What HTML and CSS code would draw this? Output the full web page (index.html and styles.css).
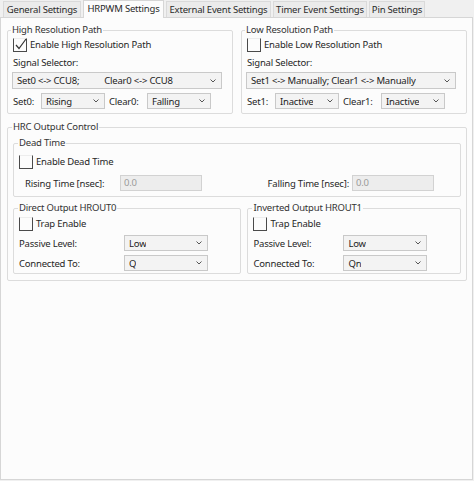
FILE: index.html
```html
<!DOCTYPE html>
<html>
<head>
<meta charset="utf-8">
<link rel="stylesheet" href="styles.css">
</head>
<body>
<div class="tabs">
  <div class="tab t-general">General Settings</div>
  <div class="tab t-hrpwm active">HRPWM Settings</div>
  <div class="tab t-ext">External Event Settings</div>
  <div class="tab t-timer">Timer Event Settings</div>
  <div class="tab t-pin">Pin Settings</div>
</div>
<div class="panel">
  <div class="top-row">
    <fieldset class="grp path">
      <legend>High Resolution Path</legend>
      <div class="chk"><span class="box"><svg width="13" height="13" viewBox="0 0 13 13"><polyline points="2,7 5,10.5 12,1" fill="none" stroke="#333" stroke-width="1.2"/></svg></span>Enable High Resolution Path</div>
      <div class="lbl">Signal Selector:</div>
      <div class="combo wide"><span class="val">Set0 &lt;-&gt; CCU8;&nbsp;&nbsp;&nbsp;&nbsp;&nbsp;&nbsp;&nbsp;&nbsp;&nbsp;&nbsp; Clear0 &lt;-&gt; CCU8</span><span class="arr"><svg width="6" height="4" viewBox="0 0 6 4"><polyline points="0.5,0.5 3,3 5.5,0.5" fill="none" stroke="#555" stroke-width="1"/></svg></span></div>
      <div class="pair">
        <span class="plbl">Set0:</span>
        <div class="combo small"><span class="val">Rising</span><span class="arr"><svg width="6" height="4" viewBox="0 0 6 4"><polyline points="0.5,0.5 3,3 5.5,0.5" fill="none" stroke="#555" stroke-width="1"/></svg></span></div>
        <span class="plbl2">Clear0:</span>
        <div class="combo small"><span class="val">Falling</span><span class="arr"><svg width="6" height="4" viewBox="0 0 6 4"><polyline points="0.5,0.5 3,3 5.5,0.5" fill="none" stroke="#555" stroke-width="1"/></svg></span></div>
      </div>
    </fieldset>
    <fieldset class="grp path">
      <legend>Low Resolution Path</legend>
      <div class="chk"><span class="box"></span>Enable Low Resolution Path</div>
      <div class="lbl">Signal Selector:</div>
      <div class="combo wide"><span class="val">Set1 &lt;-&gt; Manually; Clear1 &lt;-&gt; Manually</span><span class="arr"><svg width="6" height="4" viewBox="0 0 6 4"><polyline points="0.5,0.5 3,3 5.5,0.5" fill="none" stroke="#555" stroke-width="1"/></svg></span></div>
      <div class="pair">
        <span class="plbl">Set1:</span>
        <div class="combo small"><span class="val">Inactive</span><span class="arr"><svg width="6" height="4" viewBox="0 0 6 4"><polyline points="0.5,0.5 3,3 5.5,0.5" fill="none" stroke="#555" stroke-width="1"/></svg></span></div>
        <span class="plbl2">Clear1:</span>
        <div class="combo small"><span class="val">Inactive</span><span class="arr"><svg width="6" height="4" viewBox="0 0 6 4"><polyline points="0.5,0.5 3,3 5.5,0.5" fill="none" stroke="#555" stroke-width="1"/></svg></span></div>
      </div>
    </fieldset>
  </div>

  <fieldset class="grp hrc">
    <legend>HRC Output Control</legend>
    <fieldset class="grp dead">
      <legend>Dead Time</legend>
      <div class="chk"><span class="box"></span>Enable Dead Time</div>
      <div class="times">
        <span class="tlbl">Rising Time [nsec]:</span>
        <div class="num">0.0</div>
        <span class="tlbl2">Falling Time [nsec]:</span>
        <div class="num">0.0</div>
      </div>
    </fieldset>
    <div class="out-row">
      <fieldset class="grp out direct">
        <legend>Direct Output HROUT0</legend>
        <div class="chk"><span class="box"></span>Trap Enable</div>
        <div class="orow"><span class="olbl">Passive Level:</span><div class="combo mid"><span class="val">Low</span><span class="arr"><svg width="6" height="4" viewBox="0 0 6 4"><polyline points="0.5,0.5 3,3 5.5,0.5" fill="none" stroke="#555" stroke-width="1"/></svg></span></div></div>
        <div class="orow"><span class="olbl">Connected To:</span><div class="combo mid"><span class="val">Q</span><span class="arr"><svg width="6" height="4" viewBox="0 0 6 4"><polyline points="0.5,0.5 3,3 5.5,0.5" fill="none" stroke="#555" stroke-width="1"/></svg></span></div></div>
      </fieldset>
      <fieldset class="grp out inverted">
        <legend>Inverted Output HROUT1</legend>
        <div class="chk"><span class="box"></span>Trap Enable</div>
        <div class="orow"><span class="olbl">Passive Level:</span><div class="combo mid"><span class="val">Low</span><span class="arr"><svg width="6" height="4" viewBox="0 0 6 4"><polyline points="0.5,0.5 3,3 5.5,0.5" fill="none" stroke="#555" stroke-width="1"/></svg></span></div></div>
        <div class="orow"><span class="olbl">Connected To:</span><div class="combo mid"><span class="val">Qn</span><span class="arr"><svg width="6" height="4" viewBox="0 0 6 4"><polyline points="0.5,0.5 3,3 5.5,0.5" fill="none" stroke="#555" stroke-width="1"/></svg></span></div></div>
      </fieldset>
    </div>
  </fieldset>
</div>
</body>
</html>
```

FILE: styles.css
```css
* { box-sizing: border-box; }
html, body { margin: 0; padding: 0; }
body {
  background: #f0f0f0;
  font-family: "Noto Sans", "Open Sans", sans-serif;
  font-size: 9.5px;
  letter-spacing: -0.2px;
  color: #262626;
  width: 474px;
  height: 481px;
  overflow: hidden;
}

/* tabs */
.tabs {
  display: flex;
  align-items: flex-end;
  height: 17px;
  padding-left: 3px;
  gap: 2px;
  position: relative;
  z-index: 1;
}
.tab {
  height: 16px;
  line-height: 16px;
  text-align: center;
  background: #ebebeb;
  border: 1px solid #dadada;
  border-bottom: none;
  white-space: nowrap;
  color: #2a2a2a;
}
.tab.active {
  height: 18px;
  line-height: 16px;
  margin-bottom: -1px;
  background: #fcfcfc;
  border-color: #d6d6d6;
}
.t-general { width: 78px; }
.t-hrpwm { width: 81px; }
.t-ext { width: 105px; }
.t-timer { width: 94px; }
.t-pin { width: 56px; }

/* panel */
.panel {
  width: 473px;
  height: 463px;
  background: #fcfcfc;
  border: 1px solid #d6d6d6;
  padding: 5px 5px 0 6px;
}

fieldset.grp {
  margin: 0;
  border: 1px solid #dcdcdc;
  border-radius: 2px;
  min-width: 0;
}
fieldset.grp > legend {
  padding: 0 1px;
  margin-left: -1px;
  line-height: 14px;
  color: #333;
}
.path > legend { margin-left: 0; }

.top-row {
  display: flex;
  gap: 8px;
}
.path {
  width: 226px;
  height: 91px;
  padding: 0 4px 0 4px;
}

.chk {
  display: flex;
  align-items: center;
  height: 15px;
  white-space: nowrap;
}
.path .chk { margin-left: 1px; }
.box {
  display: inline-block;
  width: 14px;
  height: 14px;
  border: 1px solid #4a4a4a;
  border-top-color: #ededed;
  margin-right: 3px;
  position: relative;
  flex: none;
}
.box svg { position: absolute; left: 0; top: -1px; }

.lbl {
  margin-top: 4px;
  height: 14px;
  line-height: 14px;
  margin-left: 1px;
}

.combo {
  display: flex;
  align-items: center;
  justify-content: space-between;
  background: #f3f3f3;
  border: 1px solid #c9c9c9;
  height: 16px;
  padding-left: 4px;
  white-space: nowrap;
  color: #222;
}
.combo .arr {
  width: 16px;
  display: flex;
  justify-content: center;
  align-items: center;
}
.combo .val { overflow: hidden; }
.combo.wide { width: 210px; height: 17px; margin-top: 2px; }
.combo.small { width: 64px; }
.combo.mid { width: 84px; }

.pair {
  display: flex;
  align-items: center;
  margin-top: 4px;
  height: 16px;
}
.plbl { width: 29px; padding-left: 1px; }
.plbl2 { width: 42px; padding-left: 4px; }

.hrc {
  margin-top: 6px !important;
  width: 460px;
  height: 161px;
  padding: 2px 5px 0 5px;
}

.dead {
  height: 61px;
  padding: 0 5px;
}
.dead .chk { margin-top: 4px; }
.times {
  display: flex;
  align-items: center;
  margin-top: 6px;
  height: 16px;
}
.tlbl { width: 101px; padding-left: 6px; }
.tlbl2 { width: 150px; text-align: right; padding-right: 3px; }
.num {
  width: 82px;
  height: 16px;
  line-height: 14px;
  background: #ededed;
  border: 1px solid #d2d2d2;
  color: #9a9a9a;
  padding-left: 3px;
}

.out-row {
  display: flex;
  gap: 6px;
  margin-top: 4px;
}
.out {
  height: 73px;
  padding: 0 5px;
}
.direct { width: 229px; }
.inverted { width: 214px; }
.out .chk { margin-top: 1px; }
.orow {
  display: flex;
  align-items: center;
  margin-top: 4px;
  height: 16px;
}
.direct .olbl { width: 105px; }
.inverted .olbl { width: 90px; }
```
